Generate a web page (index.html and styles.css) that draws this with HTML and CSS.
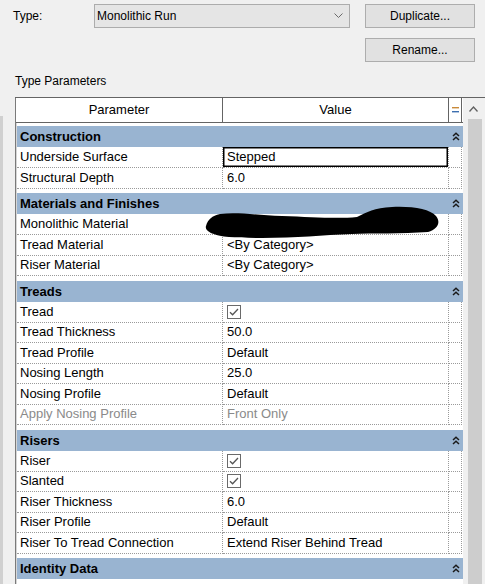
FILE: index.html
```html
<!DOCTYPE html>
<html lang="en">
<head>
    <meta charset="UTF-8">
    <title>Type Properties</title>
    <link rel="stylesheet" href="styles.css">
</head>
<body>

<div class="page">
    <div class="rail"></div>
    <div class="main">
        <div class="type-form">
            <label class="type-label">Type:</label>
            <div class="combo">
                <span>Monolithic Run</span>
                <svg class="combo-arrow" width="9" height="6" viewBox="0 0 9 6"><polyline points="0.5,0.5 4.5,4.5 8.5,0.5" fill="none" stroke="#6a6a6a" stroke-width="1"/></svg>
            </div>
            <button class="btn">Duplicate...</button>
            <button class="btn btn-rename">Rename...</button>
        </div>

        <div class="section-label">Type Parameters</div>

        <div class="props">
            <div class="props-grid">
                <div class="props-head">
                    <div class="hcell">Parameter</div>
                    <div class="hcell">Value</div>
                    <div class="hcell hcell-eq">
                        <svg width="7" height="6" viewBox="0 0 7 6"><rect x="0" y="0" width="7" height="1.4" fill="#c98a3a"/><rect x="0" y="4" width="7" height="1.4" fill="#3d6fb0"/></svg>
                    </div>
                </div>
                <div class="props-body" id="propsBody">
                    <!-- groups and rows are rendered below -->
                </div>
            </div>
            <div class="scrollbar">
                <div class="scroll-up">
                    <svg width="9" height="6" viewBox="0 0 9 6"><polyline points="0.5,5.5 4.5,1 8.5,5.5" fill="none" stroke="#606060" stroke-width="1.3"/></svg>
                </div>
                <div class="scroll-thumb"></div>
            </div>
        </div>
    </div>
</div>

<script>
    const groups = [
        { name: 'Construction', rows: [
            { param: 'Underside Surface', value: 'Stepped', editing: true },
            { param: 'Structural Depth', value: '6.0' }
        ]},
        { name: 'Materials and Finishes', rows: [
            { param: 'Monolithic Material', value: '', redacted: true },
            { param: 'Tread Material', value: '<By Category>' },
            { param: 'Riser Material', value: '<By Category>' }
        ]},
        { name: 'Treads', rows: [
            { param: 'Tread', check: true },
            { param: 'Tread Thickness', value: '50.0' },
            { param: 'Tread Profile', value: 'Default' },
            { param: 'Nosing Length', value: '25.0' },
            { param: 'Nosing Profile', value: 'Default' },
            { param: 'Apply Nosing Profile', value: 'Front Only', disabled: true }
        ]},
        { name: 'Risers', rows: [
            { param: 'Riser', check: true },
            { param: 'Slanted', check: true },
            { param: 'Riser Thickness', value: '6.0' },
            { param: 'Riser Profile', value: 'Default' },
            { param: 'Riser To Tread Connection', value: 'Extend Riser Behind Tread' }
        ]},
        { name: 'Identity Data', rows: [] }
    ];

    const collapseIcon = '<svg width="8" height="9" viewBox="0 0 8 9"><polyline points="1,4 4,1.2 7,4" fill="none" stroke="#1a1a1a" stroke-width="1.5"/><polyline points="1,8 4,5.2 7,8" fill="none" stroke="#1a1a1a" stroke-width="1.5"/></svg>';
    const checkIcon = '<svg class="check" width="14" height="14" viewBox="0 0 14 14"><rect x="0.5" y="0.5" width="13" height="13" fill="#fff" stroke="#6a6a6a"/><polyline points="3,7.2 5.6,9.8 11,4" fill="none" stroke="#555" stroke-width="1.3"/></svg>';
    const blob = '<svg class="blob" width="240" height="36" viewBox="0 0 240 36"><path d="M4,22 C6,15 10,12 18,10 C35,8 55,11 80,12 C110,13 135,15 155,13 C165,8 172,4 190,3 C210,2 228,5 234,12 C239,18 236,25 226,28 C200,30 170,29 150,30 C120,31 95,34 60,34 C35,34 18,33 12,30 C6,28 3,25 4,22 Z" fill="#000"/></svg>';

    const body = document.getElementById('propsBody');

    function createRow(row) {
        const el = document.createElement('div');
        el.classList.add('prop-row');
        if (row.disabled) el.classList.add('disabled');

        const param = document.createElement('div');
        param.classList.add('cell', 'cell-param');
        param.textContent = row.param;

        const value = document.createElement('div');
        value.classList.add('cell', 'cell-value');
        if (row.check) {
            value.innerHTML = checkIcon;
        } else {
            value.textContent = row.value;
        }
        if (row.editing) value.classList.add('editing');
        if (row.redacted) value.insertAdjacentHTML('beforeend', blob);

        const eq = document.createElement('div');
        eq.classList.add('cell', 'cell-eq');

        el.appendChild(param);
        el.appendChild(value);
        el.appendChild(eq);
        return el;
    }

    groups.forEach(group => {
        const head = document.createElement('div');
        head.classList.add('group-head');
        head.innerHTML = '<span class="group-name"></span><span class="group-toggle">' + collapseIcon + '</span>';
        head.querySelector('.group-name').textContent = group.name;
        body.appendChild(head);
        group.rows.forEach(row => body.appendChild(createRow(row)));
    });
</script>

</body>
</html>
```

FILE: styles.css
```css
body {
    margin: 0;
    background-color: #f0f0f0;
    font-family: "Liberation Sans", Arial, sans-serif;
    color: #000;
    overflow: hidden;
}

.page {
    display: flex;
    height: 584px;
}

.rail {
    width: 3px;
    margin-top: 116px;
    background-color: #d0d0d0;
}

.main {
    flex: 1;
    display: flex;
    flex-direction: column;
}

/* type selector + buttons */
.type-form {
    display: grid;
    grid-template-columns: 81px 256px 125px;
    grid-template-rows: 24px 24px;
    row-gap: 10px;
    padding: 4px 0 0 10px;
    font-size: 12px;
}

.type-label {
    align-self: center;
}

.combo {
    display: flex;
    align-items: center;
    justify-content: space-between;
    background-color: #e5e5e5;
    border: 1px solid #acacac;
    padding: 0 6px 0 2px;
    box-sizing: border-box;
}

.btn {
    margin-left: 15px;
    font: inherit;
    font-size: 12px;
    color: #000;
    background-color: #e1e1e1;
    border: 1px solid #adadad;
    padding: 0;
}

.btn-rename {
    grid-column: 3;
    grid-row: 2;
}

.section-label {
    font-size: 12px;
    line-height: 15px;
    margin: 12px 0 0 12px;
}

/* property grid */
.props {
    flex: 1;
    display: flex;
    margin: 8px 0 0 12px;
    border-top: 1px solid #646464;
}

.props-grid {
    width: 447px;
    display: flex;
    flex-direction: column;
    border-left: 1px solid #7a7a7a;
}

.props-head {
    display: grid;
    grid-template-columns: 207px 226px 13px;
    height: 25px;
    background-color: #fff;
    border-bottom: 1px solid #646464;
    box-sizing: border-box;
}

.hcell {
    font-size: 13px;
    line-height: 24px;
    text-align: center;
    border-right: 1px solid #646464;
}

.hcell-eq {
    display: flex;
    align-items: center;
    justify-content: center;
}

.props-body {
    flex: 1;
    background-color: #fff;
    border-left: 1px solid #d6d6d6;
    padding-top: 3px;
    font-size: 13px;
}

.group-head {
    display: grid;
    grid-template-columns: 432px 13px;
    height: 21px;
    margin-top: 5px;
    background-color: #99b4d1;
    font-weight: bold;
    line-height: 21px;
}

.group-head:first-child {
    margin-top: 0;
}

.group-name {
    padding-left: 3px;
}

.group-toggle {
    display: flex;
    align-items: center;
    justify-content: center;
}

.prop-row {
    display: grid;
    grid-template-columns: 206px 226px 13px;
    height: 20.5px;
}

.cell {
    line-height: 20px;
    border-bottom: 1px dotted #9a9a9a;
    border-right: 1px dotted #9a9a9a;
    white-space: nowrap;
    overflow: visible;
}

.cell-param {
    padding-left: 3px;
}

.cell-value {
    position: relative;
    padding-left: 4px;
}

.cell-value.editing {
    box-shadow: inset 0 0 0 1.5px #000;
}

.prop-row.disabled .cell {
    color: #8a8a8a;
}

.check {
    display: block;
    margin-top: 3px;
}

.blob {
    position: absolute;
    left: -21px;
    top: -10px;
}

/* fake scrollbar */
.scrollbar {
    width: 20px;
    display: flex;
    flex-direction: column;
}

.scroll-up {
    height: 21px;
    display: flex;
    align-items: center;
    justify-content: center;
}

.scroll-thumb {
    flex: 1;
    margin-left: 5px;
    width: 14px;
    background-color: #cdcdcd;
}
```
